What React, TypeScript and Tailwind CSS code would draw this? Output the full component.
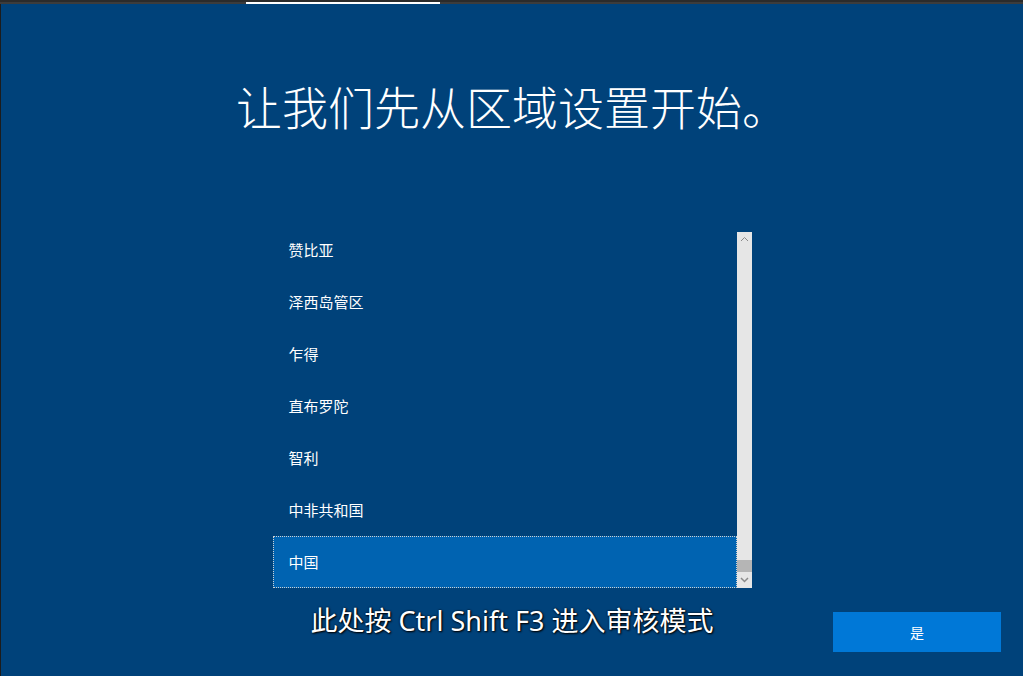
import React from "react";

const regions = ["赞比亚", "泽西岛管区", "乍得", "直布罗陀", "智利", "中非共和国", "中国"];

const cjk = { fontFamily: '"Noto Sans", "Noto Sans CJK SC", sans-serif' };

export default function App() {
  return (
    <div className="w-[1023px] h-[676px] overflow-hidden bg-[#00427a] flex flex-col" style={cjk}>
      {/* progress strip */}
      <div className="h-[4px] flex flex-col shrink-0">
        <div className="h-[2px] bg-[#2b2b2b]" />
        <div className="h-[2px] bg-[#3c3c3c] flex">
          <div className="w-[246px]" />
          <div className="w-[194px] bg-white" />
        </div>
      </div>
      <div className="flex flex-1 min-h-0">
        <div className="w-[1px] bg-[#1c1c1c]" />
        <div className="flex-1 flex flex-col items-center relative">
          <h1 className="mt-[71px] text-[46px] leading-[64px] font-light text-white">
            让我们先从区域设置开始。
          </h1>
          <div className="mt-[93px] w-[479px] h-[356px] flex overflow-hidden">
            <div className="flex-1 overflow-hidden">
              <div className="-mt-[8px] flex flex-col">
                {regions.map((r, i) => {
                  const sel = i === regions.length - 1;
                  return (
                    <div
                      key={r}
                      className={
                        sel
                          ? "h-[52px] flex items-center pl-[15px] text-[15px] text-white bg-[#0063b1] border border-dotted border-[#d0d0d0]"
                          : "h-[52px] flex items-center pl-[16px] text-[15px] text-white"
                      }
                    >
                      {r}
                    </div>
                  );
                })}
              </div>
            </div>
            <div className="w-[15px] bg-[#e6e6e6] flex flex-col items-center">
              <svg width="15" height="15" viewBox="0 0 15 15" className="shrink-0">
                <path d="M4 9 L7.5 5.5 L11 9" fill="none" stroke="#8a8a8a" strokeWidth="1" />
              </svg>
              <div className="flex-1" />
              <div className="w-[15px] h-[12px] bg-[#b5b5b5]" />
              <svg width="15" height="16" viewBox="0 0 15 16" className="shrink-0">
                <path d="M4 6 L7.5 9.5 L11 6" fill="none" stroke="#8a8a8a" strokeWidth="1.5" />
              </svg>
            </div>
          </div>
          <div className="w-full flex justify-center mt-[16px]">
            <span
              className="text-[27px] leading-[34px] text-white"
              style={{ textShadow: "0 0 2px #000, 1px 1px 2px #000" }}
            >
              此处按 Ctrl Shift F3 进入审核模式
            </span>
          </div>
          <button className="absolute left-[832px] top-[608px] w-[168px] h-[40px] bg-[#0078d7] text-white text-[14px] flex items-center justify-center">
            是
          </button>
        </div>
      </div>
    </div>
  );
}
